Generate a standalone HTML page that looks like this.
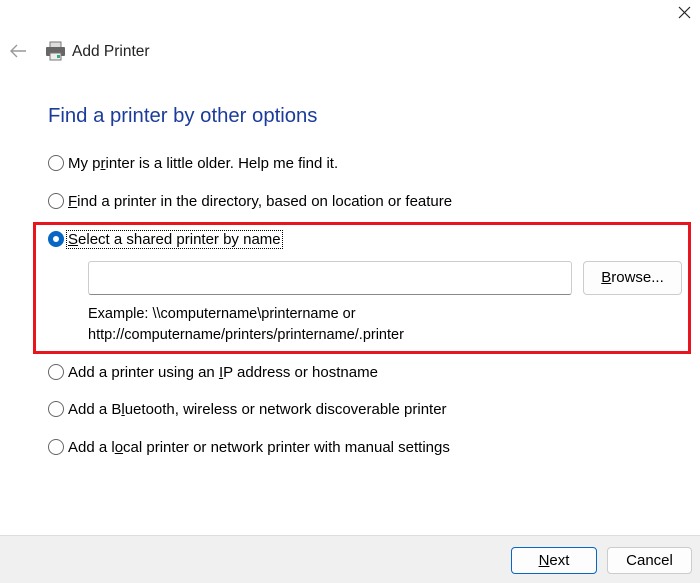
<!DOCTYPE html><html><head><style>
body{margin:0;width:700px;height:582px;background:#fff;font-family:"Liberation Sans",sans-serif;font-size:15px;color:#000;position:relative;overflow:hidden}
.a{position:absolute}
.r{position:absolute;left:48px;width:14px;height:14px;border:1px solid #666;border-radius:50%;background:#fff}
.t{position:absolute;left:68px;white-space:nowrap}
u{text-decoration:underline}
.btn{position:absolute;top:547px;height:25px;border:1px solid #ccc;border-radius:4px;background:#fdfdfd;text-align:center;line-height:25px}
</style></head><body>
<svg class="a" style="left:678px;top:6px" width="13" height="13"><path d="M1 1L12 12M12 1L1 12" stroke="#222" stroke-width="1.2"/></svg>
<svg class="a" style="left:9px;top:43px" width="18" height="16"><path d="M17 8H2M8 2L2 8l6 6" stroke="#999" stroke-width="1.4" fill="none"/></svg>
<svg class="a" style="left:45px;top:41px" width="22" height="20"><rect x="5" y="1" width="11" height="6" fill="#ddd" stroke="#777"/><rect x="1" y="6" width="19" height="9" rx="1" fill="#666"/><rect x="5" y="12" width="11" height="7" fill="#eee" stroke="#777"/><rect x="12" y="14" width="3" height="3" fill="#3a8"/></svg>
<div class="a" style="left:72px;top:43px;font-size:15.5px;color:#222">Add Printer</div>
<div class="a" style="left:48px;top:105px;font-size:20.3px;color:#1c3c9c">Find a printer by other options</div>
<div class="r" style="top:155px"></div><div class="t" style="top:155px">My p<u>r</u>inter is a little older. Help me find it.</div>
<div class="r" style="top:193px"></div><div class="t" style="top:193px"><u>F</u>ind a printer in the directory, based on location or feature</div>
<div class="a" style="left:33px;top:222px;width:652px;height:126px;border:3px solid #e8141e"></div>
<div class="a" style="left:48px;top:231px;width:16px;height:16px;border-radius:50%;background:#0867c4"></div>
<div class="a" style="left:53px;top:236px;width:6px;height:6px;border-radius:50%;background:#fff"></div>
<div class="t" style="top:230px;border:1px dotted #000;padding:0 1px;left:66px"><u>S</u>elect a shared printer by name</div>
<div class="a" style="left:88px;top:261px;width:482px;height:32px;border:1px solid #ccc;border-bottom:1px solid #888;border-radius:3px"></div>
<div class="a" style="left:583px;top:261px;width:97px;height:32px;border:1px solid #ccc;border-radius:4px;background:#fdfdfd;text-align:center;line-height:32px"><u>B</u>rowse...</div>
<div class="a" style="left:88px;top:304px;line-height:21px;font-size:14.5px">Example: \\computername\printername or<br>http://computername/printers/printername/.printer</div>
<div class="r" style="top:364px"></div><div class="t" style="top:364px">Add a printer using an <u>I</u>P address or hostname</div>
<div class="r" style="top:401px"></div><div class="t" style="top:401px">Add a B<u>l</u>uetooth, wireless or network discoverable printer</div>
<div class="r" style="top:439px"></div><div class="t" style="top:439px">Add a l<u>o</u>cal printer or network printer with manual settings</div>
<div class="a" style="left:0;top:535px;width:700px;height:47px;background:#f0f0f0;border-top:1px solid #ddd"></div>
<div class="btn" style="left:511px;width:84px;border-color:#0867c4"><u>N</u>ext</div>
<div class="btn" style="left:607px;width:83px">Cancel</div>
</body></html>
